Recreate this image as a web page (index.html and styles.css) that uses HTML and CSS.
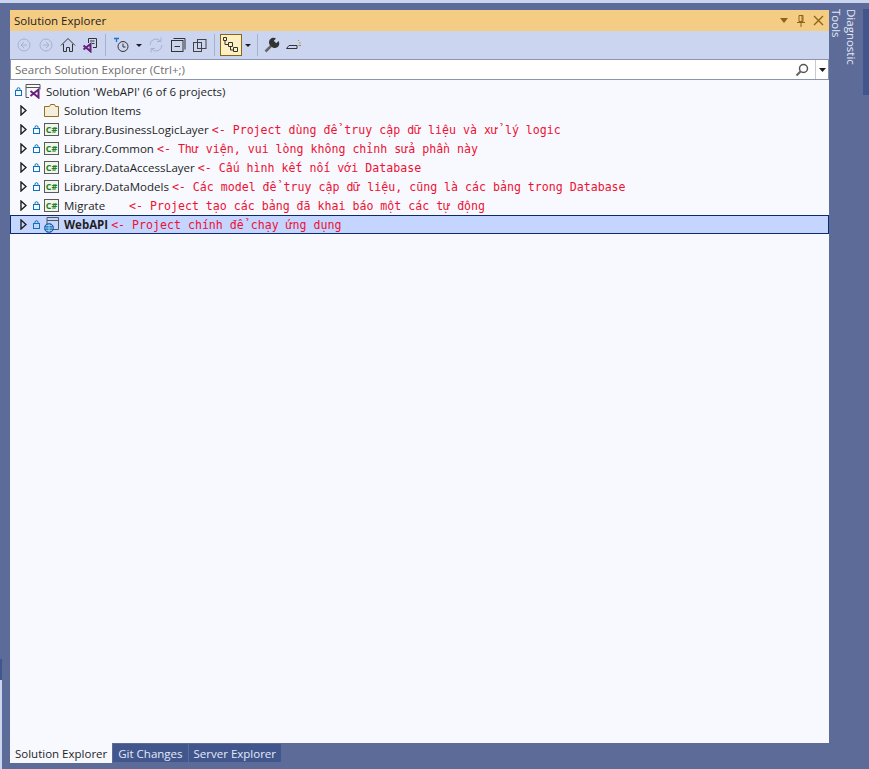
FILE: index.html
```html
<!DOCTYPE html>
<html>
  <head>
    <title>Solution Explorer</title>
    <link rel="stylesheet" href="styles.css">
  </head>
  <body>
    <svg class="defs" width="0" height="0">
      <symbol id="lock" viewBox="0 0 7 9">
        <path d="M2 3.5V2.2a1.5 1.5 0 0 1 3 0v1.3" fill="none" stroke="#0e70c0"/>
        <rect x="0.5" y="3.5" width="6" height="5" fill="none" stroke="#0e70c0"/>
      </symbol>
      <symbol id="arrow" viewBox="0 0 7 11">
        <path d="M1 1l5 4.5L1 10z" fill="none" stroke="#1e1e1e" stroke-width="1.4"/>
      </symbol>
    </svg>

    <div class="top-strip"></div>
    <div class="workspace">
      <div class="rail">
        <div class="rail-dark"></div>
        <div class="rail-light"></div>
      </div>

      <div class="panel">
        <div class="titlebar">
          <span class="title">Solution Explorer</span>
          <div class="title-btns">
            <svg width="10" height="6" viewBox="0 0 10 6"><path d="M1 0h8L5 5z" fill="#8a6516"/></svg>
            <svg width="10" height="12" viewBox="0 0 10 12"><path d="M3 .5h4v6H3zM1 7.5h8M5 8v4M6 1v5" fill="none" stroke="#8a6516"/></svg>
            <svg width="11" height="11" viewBox="0 0 11 11"><path d="M1 1l9 9M10 1l-9 9" fill="none" stroke="#8a6516" stroke-width="1.4"/></svg>
          </div>
        </div>

        <div class="toolbar">
          <span class="tool">
            <svg width="16" height="16" viewBox="0 0 16 16"><circle cx="8" cy="8" r="6" fill="none" stroke="#a8b1cc"/><path d="M11 8H5.5M8 5L5 8l3 3" fill="none" stroke="#a8b1cc"/></svg>
          </span>
          <span class="tool">
            <svg width="16" height="16" viewBox="0 0 16 16"><circle cx="8" cy="8" r="6" fill="none" stroke="#a8b1cc"/><path d="M5 8h5.5M8 5l3 3-3 3" fill="none" stroke="#a8b1cc"/></svg>
          </span>
          <span class="tool">
            <svg width="16" height="16" viewBox="0 0 16 16"><path d="M1 8.5L8 1.5l7 7M3.5 7v7.5H6.5v-4h3v4h3V7" fill="none" stroke="#333"/></svg>
          </span>
          <span class="tool">
            <svg width="16" height="16" viewBox="0 0 16 16"><path d="M6.5 6V1.5h8v9H11M8 4h4.500M10 6.500h2.500" fill="none" stroke="#333"/><path d="M1.500 8.500l7 5.800V7L1.500 12.500" fill="none" stroke="#68217a" stroke-width="2"/></svg>
          </span>
          <span class="sep sep-wide"></span>
          <span class="tool">
            <svg width="16" height="16" viewBox="0 0 16 16"><path d="M0 1.500h5M2.500 1.500v3.500" fill="none" stroke="#1e74c0" stroke-width="1.300"/><circle cx="9" cy="9.500" r="5" fill="none" stroke="#333"/><path d="M9 6.500v3.500h2.500" fill="none" stroke="#333"/></svg>
          </span>
          <span class="caret-btn"><svg width="6" height="3" viewBox="0 0 6 3"><path d="M0 0h6L3 3z" fill="#1e1e1e"/></svg></span>
          <span class="tool">
            <svg width="16" height="16" viewBox="0 0 16 16"><path d="M2 8a6 6 0 0 1 10.500-4M14 8a6 6 0 0 1-10.500 4M13 .5v4H9M3 15.500v-4h4" fill="none" stroke="#a8b1cc"/></svg>
          </span>
          <span class="tool">
            <svg width="16" height="16" viewBox="0 0 16 16"><rect x="1.500" y="3.500" width="11.500" height="11" fill="none" stroke="#333"/><path d="M3.500 1.500h11.500v11M4.500 9.500h5.500" fill="none" stroke="#333"/></svg>
          </span>
          <span class="tool">
            <svg width="16" height="16" viewBox="0 0 16 16"><rect x="1.500" y="5.500" width="8" height="9" fill="none" stroke="#444"/><rect x="5.500" y="2.500" width="8.500" height="9" fill="none" stroke="#444"/></svg>
          </span>
          <span class="sep"></span>
          <span class="tool tool-on">
            <svg width="16" height="16" viewBox="0 0 16 16"><path d="M.5.5h3v3h-3zM5.500 5.500h4v4h-4zM10.500 10.500h4v4h-4zM2 3.500v4h3.500M7.500 9.500v3.500h3" fill="none" stroke="#333"/></svg>
          </span>
          <span class="caret-btn"><svg width="6" height="3" viewBox="0 0 6 3"><path d="M0 0h6L3 3z" fill="#1e1e1e"/></svg></span>
          <span class="sep sep-tight"></span>
          <span class="tool">
            <svg width="16" height="16" viewBox="0 0 16 16"><path d="M1.500 14.500L8 8" fill="none" stroke="#666" stroke-width="2.500"/><path d="M7 9a4.500 4.500 0 0 1 5-7.500L9.800 3.800l2.400 2.400L14.500 4A4.500 4.500 0 0 1 7 9z" fill="#333"/></svg>
          </span>
          <span class="tool">
            <svg width="16" height="16" viewBox="0 0 16 16"><path d="M.5 11.500h10.500V8.500H3L.5 11.500z" fill="none" stroke="#333"/><path d="M13 6h1.500M12.500 8.500H15M12 3.500h1" fill="none" stroke="#b08a2a"/></svg>
          </span>
        </div>

        <div class="search">
          <span class="search-text">Search Solution Explorer (Ctrl+;)</span>
          <svg class="search-icon" width="14" height="14" viewBox="0 0 14 14"><circle cx="8.500" cy="5.500" r="4" fill="none" stroke="#555" stroke-width="1.500"/><path d="M1.500 12.500l4-4" fill="none" stroke="#666" stroke-width="2.200"/></svg>
          <span class="search-drop"><svg width="7" height="4" viewBox="0 0 7 4"><path d="M0 0h7L3.500 4z" fill="#1e1e1e"/></svg></span>
        </div>

        <div class="tree">
          <div class="row row-solution">
            <svg class="lock" width="7" height="9"><use href="#lock"/></svg>
            <svg class="sol-icon" width="16" height="15" viewBox="0 0 16 15">
              <path d="M4 13.500H1V.5h14v5M1 3.500h14" fill="none" stroke="#555"/>
              <path d="M5.500 7l8 6.500V5.500L5.500 12" fill="none" stroke="#68217a" stroke-width="2"/>
            </svg>
            <span class="label">Solution 'WebAPI' (6 of 6 projects)</span>
          </div>
          <div class="row">
            <svg class="arrow" width="7" height="11"><use href="#arrow"/></svg>
            <span class="no-lock"></span>
            <svg class="item-icon" width="15" height="13" viewBox="0 0 15 13"><path d="M.5 2.500h5l1-2h4l1 2h3v10H.5z" fill="#f3efdc" stroke="#9a6d1c"/></svg>
            <span class="label">Solution Items</span>
          </div>
          <div class="row">
            <svg class="arrow" width="7" height="11"><use href="#arrow"/></svg>
            <svg class="lock" width="7" height="9"><use href="#lock"/></svg>
            <span class="cs-icon">C#</span>
            <span class="label">Library.BusinessLogicLayer</span>
            <span class="note">&lt;- Project dùng để truy cập dữ liệu và xử lý logic</span>
          </div>
          <div class="row">
            <svg class="arrow" width="7" height="11"><use href="#arrow"/></svg>
            <svg class="lock" width="7" height="9"><use href="#lock"/></svg>
            <span class="cs-icon">C#</span>
            <span class="label">Library.Common</span>
            <span class="note">&lt;- Thư viện, vui lòng không chỉnh sửa phần này</span>
          </div>
          <div class="row">
            <svg class="arrow" width="7" height="11"><use href="#arrow"/></svg>
            <svg class="lock" width="7" height="9"><use href="#lock"/></svg>
            <span class="cs-icon">C#</span>
            <span class="label">Library.DataAccessLayer</span>
            <span class="note">&lt;- Cấu hình kết nối với Database</span>
          </div>
          <div class="row">
            <svg class="arrow" width="7" height="11"><use href="#arrow"/></svg>
            <svg class="lock" width="7" height="9"><use href="#lock"/></svg>
            <span class="cs-icon">C#</span>
            <span class="label">Library.DataModels</span>
            <span class="note">&lt;- Các model để truy cập dữ liệu, cũng là các bảng trong Database</span>
          </div>
          <div class="row">
            <svg class="arrow" width="7" height="11"><use href="#arrow"/></svg>
            <svg class="lock" width="7" height="9"><use href="#lock"/></svg>
            <span class="cs-icon">C#</span>
            <span class="label">Migrate</span>
            <span class="note">   &lt;- Project tạo các bảng đã khai báo một các tự động</span>
          </div>
          <div class="row row-selected">
            <svg class="arrow" width="7" height="11"><use href="#arrow"/></svg>
            <svg class="lock" width="7" height="9"><use href="#lock"/></svg>
            <svg class="item-icon" width="15" height="17" viewBox="0 0 15 17">
              <path d="M3 8V1.500h11.500v12H9M3 4.500h11.500" fill="none" stroke="#555"/>
              <circle cx="5" cy="12" r="4.500" fill="#2b7fc9" stroke="#1c5f9e"/>
              <path d="M.5 12h9M5 7.500v9M2 9.500h6M2 14.500h6" fill="none" stroke="#cfe4f7" stroke-width=".7"/>
            </svg>
            <span class="label label-bold">WebAPI</span>
            <span class="note">&lt;- Project chính để chạy ứng dụng</span>
          </div>
        </div>

        <div class="tabs">
          <span class="tab tab-active">Solution Explorer</span>
          <span class="tab">Git Changes</span>
          <span class="tab">Server Explorer</span>
        </div>
      </div>

      <div class="side">
        <span class="side-label">Diagnostic Tools</span>
        <span class="side-bar"></span>
      </div>
    </div>
  </body>
</html>
```

FILE: styles.css
```css
html,
body {
  margin: 0;
  padding: 0;
}
body {
  width: 869px;
  height: 769px;
  overflow: hidden;
  display: flex;
  flex-direction: column;
  background-color: #5d6b99;
  font-family: "Open Sans", "Noto Sans", sans-serif;
  font-size: 11.5px;
  color: #1e1e1e;
}
.defs {
  position: absolute;
}
.top-strip {
  height: 3px;
  background-color: #ccd5f0;
}
.workspace {
  flex: 1;
  display: flex;
  min-height: 0;
}

/* left edge of the window */
.rail {
  width: 2px;
  display: flex;
  flex-direction: column;
  padding-top: 656px;
}
.rail-dark {
  height: 21px;
  background-color: #40568d;
}
.rail-light {
  height: 89px;
  background-color: #ccd5f0;
}

.panel {
  width: 827px;
  margin: 7px 0 6px 8px;
  display: flex;
  flex-direction: column;
}

.titlebar {
  height: 21px;
  flex: none;
  display: flex;
  align-items: center;
  justify-content: space-between;
  padding: 0 5px 0 4px;
  background-color: #f5cc84;
}
.title-btns {
  display: flex;
  align-items: center;
  gap: 7px;
}

.toolbar {
  height: 28px;
  flex: none;
  display: flex;
  align-items: center;
  padding-left: 3px;
  background-color: #ccd5f0;
}
.tool {
  width: 22px;
  height: 22px;
  box-sizing: border-box;
  display: flex;
  align-items: center;
  justify-content: center;
}
.tool-on {
  background-color: #fff0c4;
  border: 1px solid #8a6516;
}
.caret-btn {
  width: 12px;
  display: flex;
  justify-content: center;
}
.sep {
  width: 1px;
  height: 22px;
  margin: 0 5px 0 3px;
  background-color: #a8b1cc;
}
.sep-wide {
  margin: 0 5px 0 4px;
}
.sep-tight {
  margin-right: 3px;
}

.search {
  height: 21px;
  flex: none;
  box-sizing: border-box;
  display: flex;
  align-items: center;
  background-color: #fff;
  border: 1px solid #8c93ad;
  padding-left: 4px;
}
.search-text {
  flex: 1;
  color: #6d6d6d;
}
.search-icon {
  margin-right: 6px;
}
.search-drop {
  width: 12px;
  height: 100%;
  display: flex;
  align-items: center;
  justify-content: center;
  border-left: 1px solid #c4cadb;
}

.tree {
  flex: 1;
  padding-top: 2px;
  background-color: #f7f9fe;
}
.row {
  height: 19px;
  box-sizing: border-box;
  display: flex;
  align-items: center;
  padding-left: 10px;
  white-space: pre;
}
.row-solution {
  padding-left: 5px;
}
.row-selected {
  background-color: #c4d5ff;
  border: 1px solid #0e2a6e;
  padding-left: 9px;
}
.lock {
  flex: none;
}
.no-lock {
  width: 7px;
  flex: none;
}
.arrow {
  flex: none;
  margin-right: 6px;
}
.sol-icon {
  flex: none;
  margin: 0 5px 0 3px;
}
.item-icon {
  flex: none;
  margin: 0 5px 0 4px;
}
.cs-icon {
  width: 15px;
  height: 13px;
  flex: none;
  box-sizing: border-box;
  margin: 0 5px 0 4px;
  border: 1px solid #5a5a5a;
  background-color: #f1f5ec;
  color: #1f801f;
  font-size: 9px;
  font-weight: 700;
  line-height: 11px;
  text-align: center;
}
.label-bold {
  font-weight: 700;
}
.note {
  margin-left: 3px;
  color: #ee1133;
  font-family: "DejaVu Sans Mono", "Liberation Mono", monospace;
  font-size: 11.6px;
}

.tabs {
  height: 20px;
  flex: none;
  display: flex;
  gap: 1px;
}
.tab {
  height: 18px;
  padding: 0 5px;
  display: flex;
  align-items: center;
  background-color: #40568d;
  color: #e4e9f7;
  margin-top: 1px;
}
.tab-active {
  height: 20px;
  margin-top: 0;
  background-color: #f7f9fe;
  color: #1e1e1e;
}

.side {
  flex: 1;
  display: flex;
  justify-content: flex-end;
  margin-top: 6px;
  height: 86px;
}
.side-label {
  writing-mode: vertical-rl;
  color: #e4e9f7;
  margin-right: 4px;
}
.side-bar {
  width: 6px;
  background-color: #40568d;
}
```
